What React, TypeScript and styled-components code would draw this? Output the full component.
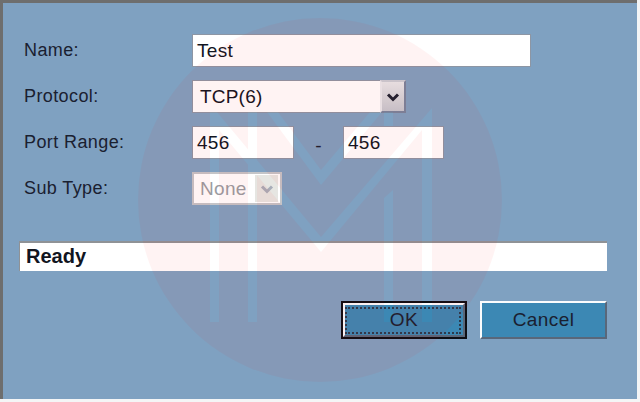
import React from 'react'
import styled, { createGlobalStyle } from 'styled-components'

const GlobalStyle = createGlobalStyle`
    html, body {
        margin: 0;
        padding: 0;
        background: #f4f5f6;
    }
    body {
        width: 640px;
        height: 402px;
        overflow: hidden;
        font-family: "Liberation Sans", Arial, sans-serif;
    }
`

const Dialog = styled.div`
    position: relative;
    box-sizing: border-box;
    width: 637px;
    height: 399px;
    padding: 31px 30px 0 16px;
    background: #7fa1c1;
    border-top: 3px solid #6e6e6e;
    border-left: 3px solid #6e6e6e;
    color: #11151f;
`

const Form = styled.div`
    display: grid;
    grid-template-columns: 173px auto;
    row-gap: 13px;
`

const Label = styled.label`
    align-self: center;
    padding-left: 5px;
    font-size: 18px;
    letter-spacing: 0.4px;
    color: #1a2030;
`

const Row = styled.div`
    display: flex;
    align-items: center;
    height: 33px;
`

const TextBox = styled.div<{ $width: number }>`
    box-sizing: border-box;
    width: ${props => props.$width}px;
    height: 33px;
    line-height: 31px;
    padding-left: 4px;
    background: #fff;
    border: 1px solid #8d96a4;
    font-size: 19px;
    letter-spacing: 0.3px;
    color: #11151f;
`

const Dash = styled.span`
    width: 49px;
    text-align: center;
    font-size: 19px;
    padding-top: 6px;
    color: #1a2030;
`

const SelectBox = styled.div`
    box-sizing: border-box;
    display: flex;
    width: 214px;
    height: 33px;
    background: #fff;
    border: 1px solid #8d96a4;
`

const SelectValue = styled.div`
    flex: 1;
    line-height: 31px;
    padding-left: 7px;
    font-size: 19px;
    letter-spacing: 0.2px;
    color: #11151f;
`

const ArrowButton = styled.div`
    box-sizing: border-box;
    display: flex;
    align-items: center;
    justify-content: center;
    width: 26px;
    height: 33px;
    margin: -1px -1px 0 0;
    background: linear-gradient(#e6e8ea, #c5c8cf);
    border: 2px solid #77859d;
    border-left-color: #e8eaee;
    border-top-color: #c8cdd4;
    color: #1c2232;
`

const DisabledSelect = styled.div`
    box-sizing: border-box;
    display: flex;
    align-items: center;
    width: 90px;
    height: 33px;
    padding: 2px;
    background: #fff;
    border: 2px solid #c4c5c8;
`

const DisabledValue = styled.div`
    flex: 1;
    padding-left: 4px;
    font-size: 19px;
    letter-spacing: 0.3px;
    color: #9a9da2;
`

const DisabledArrow = styled.div`
    display: flex;
    align-items: center;
    justify-content: center;
    width: 23px;
    height: 27px;
    background: #e6e6e2;
    color: #a8adb8;
`

const StatusBar = styled.div`
    box-sizing: border-box;
    width: 588px;
    height: 30px;
    margin-top: 36px;
    padding-left: 6px;
    line-height: 26px;
    background: #fff;
    border-top: 2px solid #8f9296;
    border-left: 1px solid #8f9296;
    font-size: 20px;
    font-weight: bold;
    color: #11151f;
`

const Actions = styled.div`
    display: flex;
    justify-content: flex-end;
    gap: 13px;
    width: 588px;
    margin-top: 30px;
`

const Button = styled.button<{ $focused?: boolean }>`
    box-sizing: border-box;
    position: relative;
    width: ${props => (props.$focused ? 122 : 127)}px;
    height: ${props => (props.$focused ? 34 : 38)}px;
    margin: ${props => (props.$focused ? 2 : 0)}px;
    padding: 0;
    background: #3c88b4;
    border: 2px solid;
    border-color: #fbfcfd #59677a #59677a #fbfcfd;
    outline: ${props => (props.$focused ? '2px solid #0c0e14' : 'none')};
    font-family: inherit;
    font-size: 19px;
    letter-spacing: 0.4px;
    color: #1a2030;
`

const FocusRing = styled.span`
    position: absolute;
    inset: 2px 2px 1px 0;
    border: 2px dotted #2c3a4c;
`

const Watermark = styled.svg`
    position: absolute;
    left: -3px;
    top: -3px;
    width: 640px;
    height: 402px;
    pointer-events: none;
`

function Chevron() {
    return (
        <svg width="14" height="10" viewBox="0 0 14 10">
            <path d="M2 2.5 L7 7.5 L12 2.5" fill="none" stroke="currentColor" strokeWidth="3" />
        </svg>
    )
}

export default function App() {
    return (
        <>
            <GlobalStyle />
            <Dialog>
                <Form>
                    <Label>Name:</Label>
                    <TextBox $width={339}>Test</TextBox>
                    <Label>Protocol:</Label>
                    <Row>
                        <SelectBox>
                            <SelectValue>TCP(6)</SelectValue>
                            <ArrowButton><Chevron /></ArrowButton>
                        </SelectBox>
                    </Row>
                    <Label>Port Range:</Label>
                    <Row>
                        <TextBox $width={102}>456</TextBox>
                        <Dash>-</Dash>
                        <TextBox $width={101}>456</TextBox>
                    </Row>
                    <Label>Sub Type:</Label>
                    <Row>
                        <DisabledSelect>
                            <DisabledValue>None</DisabledValue>
                            <DisabledArrow><Chevron /></DisabledArrow>
                        </DisabledSelect>
                    </Row>
                </Form>
                <StatusBar>Ready</StatusBar>
                <Actions>
                    <Button $focused><FocusRing />OK</Button>
                    <Button>Cancel</Button>
                </Actions>
                <Watermark viewBox="0 0 640 402">
                    <defs>
                        <mask id="logo-cut">
                            <rect width="640" height="402" fill="#fff" />
                            <g fill="#000">
                                <path d="M210 112 H217 L321 237 L432 108 V322 H422 V130 L321 252 L219 130 V322 H210 Z" />
                                <path d="M248 112 H257 V322 H248 Z" />
                                <path d="M267 112 H278 L321 170 L370 112 H382 L321 185 Z" />
                                <path d="M384 198 L393 190 V322 H384 Z" />
                                <path d="M384 112 H393 V126 H384 Z" />
                            </g>
                        </mask>
                    </defs>
                    <circle cx="320" cy="200" r="182" fill="rgba(255,0,0,0.048)" mask="url(#logo-cut)" />
                </Watermark>
            </Dialog>
        </>
    )
}
